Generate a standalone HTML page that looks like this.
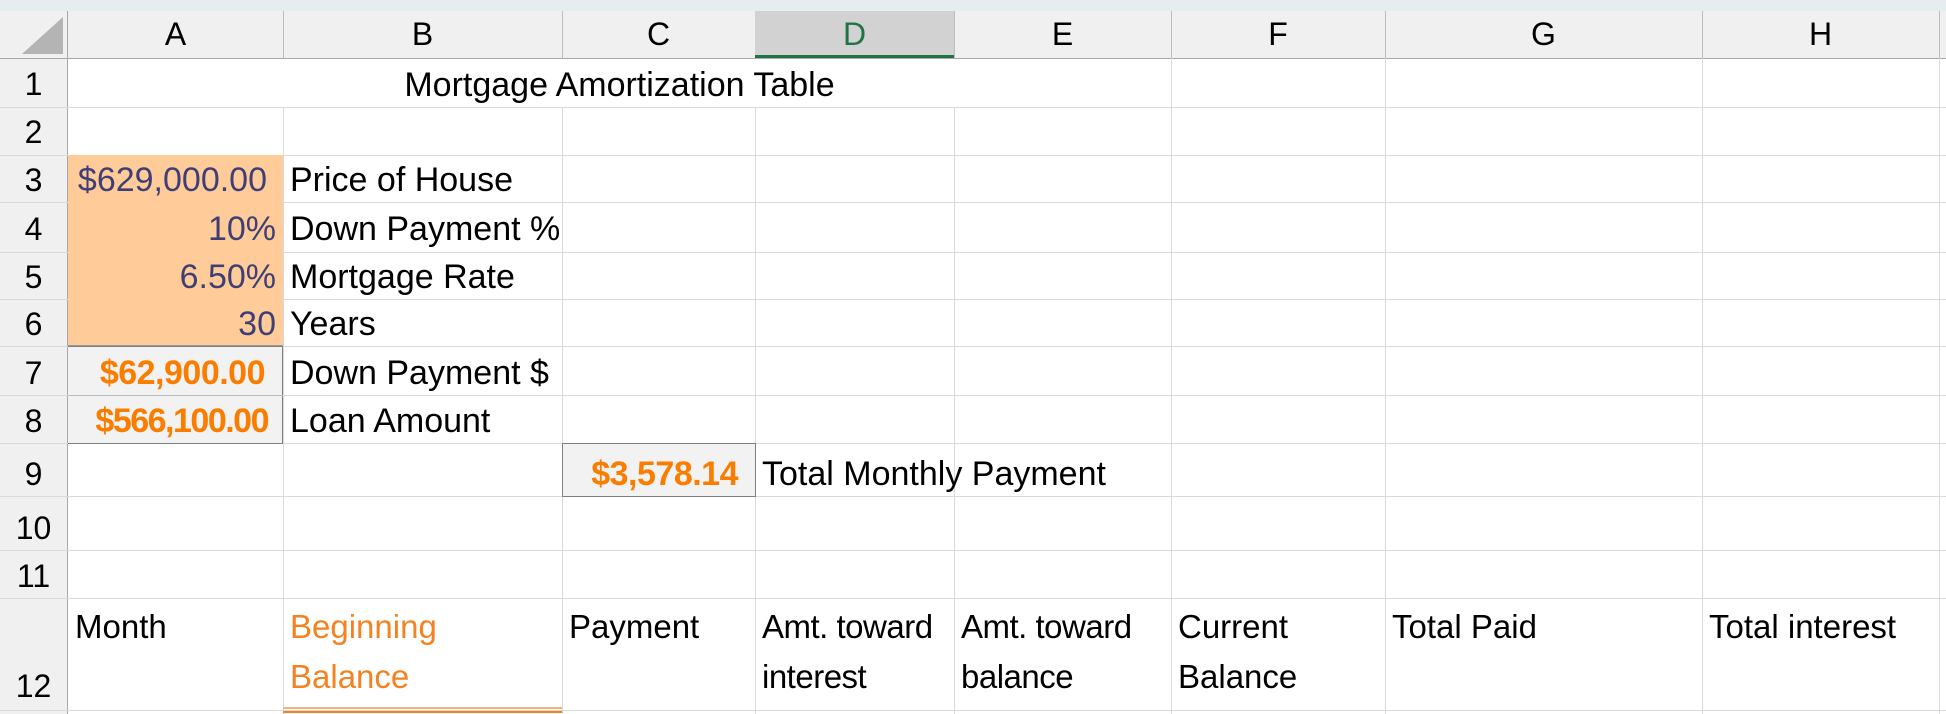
<!DOCTYPE html>
<html><head><meta charset="utf-8"><style>
*{margin:0;padding:0;box-sizing:border-box}
body{width:1946px;height:714px;overflow:hidden;background:#fff;position:relative;font-family:"Liberation Sans",Calibri,sans-serif;font-size:34px;color:#000}
.a{position:absolute}
.v{position:absolute;width:1px;background:#dadada}
.h{position:absolute;height:1px;background:#dadada}
.t{position:absolute;height:44px;line-height:44px;white-space:nowrap}
.hd{position:absolute;top:11px;height:47px;line-height:47px;text-align:center;font-size:32px}
.rn{position:absolute;left:0;width:67px;text-align:center;font-size:32px;line-height:44px;height:44px}
</style></head><body>
<div class="a" style="left:0;top:0;width:1946px;height:11px;background:#e6edf0"></div>
<div class="a" style="left:0;top:11px;width:1946px;height:47px;background:#f0f0f0"></div>
<div class="a" style="left:0;top:58px;width:68px;height:656px;background:#f0f0f0"></div>
<div class="a" style="left:755px;top:11px;width:199px;height:47px;background:#d2d2d2"></div>
<div class="a" style="left:755px;top:55px;width:199px;height:3px;background:#217346"></div>
<svg class="a" style="left:0;top:11px" width="68" height="47"><polygon points="22,43 63,43 63,6" fill="#b4b4b4"/></svg>
<div class="a" style="left:283px;top:11px;width:1px;height:47px;background:#bdbdbd"></div>
<div class="a" style="left:562px;top:11px;width:1px;height:47px;background:#bdbdbd"></div>
<div class="a" style="left:954px;top:11px;width:1px;height:47px;background:#bdbdbd"></div>
<div class="a" style="left:1171px;top:11px;width:1px;height:47px;background:#bdbdbd"></div>
<div class="a" style="left:1385px;top:11px;width:1px;height:47px;background:#bdbdbd"></div>
<div class="a" style="left:1702px;top:11px;width:1px;height:47px;background:#bdbdbd"></div>
<div class="a" style="left:1939px;top:11px;width:1px;height:47px;background:#bdbdbd"></div>
<div class="hd" style="left:68px;width:215px">A</div>
<div class="hd" style="left:283px;width:279px">B</div>
<div class="hd" style="left:562px;width:193px">C</div>
<div class="hd" style="left:755px;width:199px;color:#217346">D</div>
<div class="hd" style="left:954px;width:217px">E</div>
<div class="hd" style="left:1171px;width:214px">F</div>
<div class="hd" style="left:1385px;width:317px">G</div>
<div class="hd" style="left:1702px;width:237px">H</div>
<div class="a" style="left:0;top:58px;width:1946px;height:1px;background:#a8a8a8"></div>
<div class="a" style="left:67px;top:11px;width:1px;height:703px;background:#a8a8a8"></div>
<div class="v" style="left:283px;top:107px;height:607px"></div>
<div class="v" style="left:562px;top:107px;height:607px"></div>
<div class="v" style="left:755px;top:107px;height:607px"></div>
<div class="v" style="left:954px;top:107px;height:607px"></div>
<div class="v" style="left:1171px;top:58px;height:656px"></div>
<div class="v" style="left:1385px;top:58px;height:656px"></div>
<div class="v" style="left:1702px;top:58px;height:656px"></div>
<div class="v" style="left:1939px;top:58px;height:656px"></div>
<div class="h" style="left:0;top:107px;width:1946px"></div>
<div class="h" style="left:0;top:155px;width:1946px"></div>
<div class="h" style="left:0;top:202px;width:1946px"></div>
<div class="h" style="left:0;top:252px;width:1946px"></div>
<div class="h" style="left:0;top:299px;width:1946px"></div>
<div class="h" style="left:0;top:346px;width:1946px"></div>
<div class="h" style="left:0;top:395px;width:1946px"></div>
<div class="h" style="left:0;top:443px;width:1946px"></div>
<div class="h" style="left:0;top:496px;width:1946px"></div>
<div class="h" style="left:0;top:550px;width:1946px"></div>
<div class="h" style="left:0;top:598px;width:1946px"></div>
<div class="h" style="left:0;top:710px;width:1946px"></div>
<div class="rn" style="top:62px">1</div>
<div class="rn" style="top:110px">2</div>
<div class="rn" style="top:158px">3</div>
<div class="rn" style="top:207px">4</div>
<div class="rn" style="top:255px">5</div>
<div class="rn" style="top:302px">6</div>
<div class="rn" style="top:351px">7</div>
<div class="rn" style="top:399px">8</div>
<div class="rn" style="top:452px">9</div>
<div class="rn" style="top:506px">10</div>
<div class="rn" style="top:554px">11</div>
<div class="rn" style="top:664px">12</div>
<div class="a" style="left:68px;top:155px;width:215px;height:191px;background:#ffcc99;border-bottom:1px solid #999"></div>
<div class="a" style="left:68px;top:346px;width:215px;height:98px;background:#f2f2f2;border:1px solid #7f7f7f;border-left:none"></div>
<div class="a" style="left:68px;top:395px;width:215px;height:1px;background:#bbb"></div>
<div class="a" style="left:562px;top:443px;width:194px;height:54px;background:#f2f2f2;border:1px solid #7f7f7f"></div>
<div class="t" style="left:68px;width:1103px;top:63px;text-align:center">Mortgage Amortization Table</div>
<div class="t" style="left:68px;width:199px;top:158px;text-align:right;color:#3f3f76">$629,000.00</div>
<div class="t" style="left:68px;width:208px;top:207px;text-align:right;color:#3f3f76">10%</div>
<div class="t" style="left:68px;width:208px;top:255px;text-align:right;color:#3f3f76">6.50%</div>
<div class="t" style="left:68px;width:208px;top:302px;text-align:right;color:#3f3f76">30</div>
<div class="t" style="left:68px;width:197px;top:351px;text-align:right;color:#fa7d00;font-weight:bold;letter-spacing:-0.5px">$62,900.00</div>
<div class="t" style="left:70px;width:198px;top:399px;text-align:right;color:#fa7d00;font-weight:bold;letter-spacing:-1.5px">$566,100.00</div>
<div class="t" style="left:290px;top:158px">Price of House</div>
<div class="t" style="left:290px;top:207px">Down Payment %</div>
<div class="t" style="left:290px;top:255px">Mortgage Rate</div>
<div class="t" style="left:290px;top:302px">Years</div>
<div class="t" style="left:290px;top:351px">Down Payment $</div>
<div class="t" style="left:290px;top:399px">Loan Amount</div>
<div class="t" style="left:562px;width:176px;top:452px;text-align:right;color:#fa7d00;font-weight:bold;letter-spacing:-0.5px">$3,578.14</div>
<div class="t" style="left:762px;top:452px">Total Monthly Payment</div>
<div class="a" style="left:0;top:602px;width:1946px;line-height:50px;font-size:33px">
<div class="a" style="left:75px;white-space:nowrap">Month</div>
<div class="a" style="left:290px;color:#f58220;white-space:nowrap">Beginning<br>Balance</div>
<div class="a" style="left:569px;white-space:nowrap">Payment</div>
<div class="a" style="left:762px;white-space:nowrap;letter-spacing:-0.5px">Amt. toward<br>interest</div>
<div class="a" style="left:961px;white-space:nowrap;letter-spacing:-0.5px">Amt. toward<br>balance</div>
<div class="a" style="left:1178px;white-space:nowrap">Current<br>Balance</div>
<div class="a" style="left:1392px;white-space:nowrap">Total Paid</div>
<div class="a" style="left:1709px;white-space:nowrap">Total interest</div>
</div>
<div class="a" style="left:283px;top:707px;width:279px;height:2px;background:#f4b183"></div>
<div class="a" style="left:283px;top:711px;width:279px;height:2px;background:#f58220"></div>
</body></html>
